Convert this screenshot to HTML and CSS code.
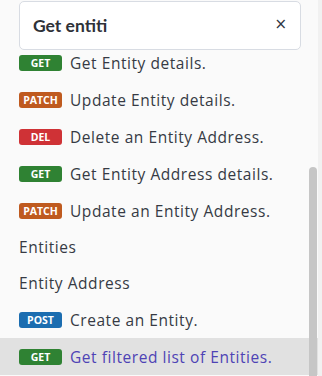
FILE: index.html
```html
<!DOCTYPE html>
<html>
<head>
<meta charset="utf-8">
<link rel="stylesheet" href="styles.css">
</head>
<body>
<div class="panel">
  <div class="search">
    <span class="query">Get entiti</span>
    <span class="clear">×</span>
  </div>
  <ul class="list">
    <li class="row"><span class="badge get">GET</span><span class="label">Get Entity details.</span></li>
    <li class="row"><span class="badge patch">PATCH</span><span class="label">Update Entity details.</span></li>
    <li class="row"><span class="badge del">DEL</span><span class="label">Delete an Entity Address.</span></li>
    <li class="row"><span class="badge get">GET</span><span class="label">Get Entity Address details.</span></li>
    <li class="row"><span class="badge patch">PATCH</span><span class="label">Update an Entity Address.</span></li>
    <li class="row group"><span class="label">Entities</span></li>
    <li class="row group"><span class="label">Entity Address</span></li>
    <li class="row"><span class="badge post">POST</span><span class="label">Create an Entity.</span></li>
    <li class="row active"><span class="badge get">GET</span><span class="label">Get filtered list of Entities.</span></li>
  </ul>
  <div class="scrollbar"><div class="thumb"></div></div>
</div>
</body>
</html>
```
FILE: styles.css
```css
html, body {
  margin: 0;
  padding: 0;
  background: #fafafa;
}
body {
  width: 322px;
  height: 376px;
  overflow: hidden;
}
.panel {
  position: relative;
  width: 322px;
  height: 376px;
  background: #fafafa;
  border-right: 4px solid #f1f1f1;
  box-sizing: border-box;
  overflow: hidden;
}
.search {
  position: relative;
  z-index: 2;
  margin: 1px 17px -6px 19px;
  height: 49px;
  box-sizing: border-box;
  background: #fff;
  border: 1px solid #d8dce3;
  border-radius: 5px;
  display: flex;
  align-items: center;
  justify-content: space-between;
  padding: 0 13px 0 13px;
}
.query {
  font-family: Lato, "Liberation Sans", sans-serif;
  font-weight: 700;
  font-size: 17.5px;
  color: #2e3138;
}
.clear {
  font-family: "DejaVu Sans", sans-serif;
  font-size: 15px;
  color: #2f3645;
  line-height: 1;
  margin-top: -2px;
}
.list {
  list-style: none;
  margin: 0;
  padding: 0;
  position: relative;
  z-index: 1;
}
.row {
  height: 37px;
  display: flex;
  align-items: center;
  gap: 8px;
  padding-left: 19px;
  margin-right: -4px;
}
.row.group {
  height: 36px;
}
.row.active {
  background: #e1e1e1;
}
.badge {
  width: 43px;
  height: 16px;
  border-radius: 3px;
  display: flex;
  align-items: center;
  justify-content: center;
  font-family: "Open Sans", sans-serif;
  font-weight: 700;
  font-size: 10.5px;
  color: #fff;
  flex: none;
}
.get { background: #2f8233; }
.patch { background: #bf5a1f; }
.del { background: #cf3236; }
.post { background: #1b6db0; }
.label {
  font-family: "Open Sans", sans-serif;
  font-size: 15.5px;
  letter-spacing: 0.55px;
  color: #363a44;
  white-space: nowrap;
}
.row.active .label {
  color: #4e43b5;
}
.scrollbar {
  position: absolute;
  z-index: 3;
  top: 0;
  bottom: 0;
  right: 1px;
  width: 8px;
}
.thumb {
  position: absolute;
  left: 0;
  right: 0;
  top: 167px;
  bottom: -4px;
  background: #c6c6c6;
  border-radius: 4px;
}
```
